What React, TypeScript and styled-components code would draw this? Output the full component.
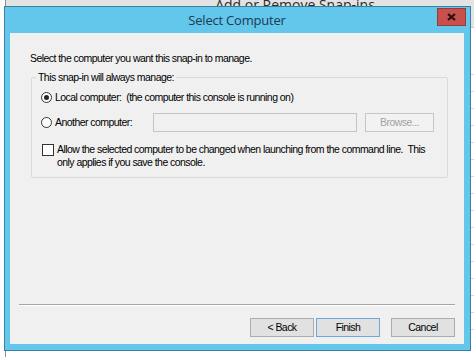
import styled, { createGlobalStyle } from 'styled-components';

const GlobalStyle = createGlobalStyle`
  html, body {
    margin: 0;
    padding: 0;
  }
  body {
    background: #ffffff;
    overflow: hidden;
  }
`;

const Screen = styled.div`
  position: relative;
  width: 474px;
  height: 357px;
  overflow: hidden;
  background: #ffffff;
`;

// the window behind the dialog
const ParentWindow = styled.div`
  margin-left: 5px;
  height: 100%;
  border-left: 1px solid #8e8e8e;
  display: flex;
  flex-direction: column;
`;

const ParentTitle = styled.div`
  height: 30px;
  background: #e3e3e3;
  border-bottom: 1px solid #c9c9c9;
  font-family: 'Open Sans', sans-serif;
  font-size: 14px;
  line-height: 16px;
  color: #2b2b2b;
  text-align: center;
  padding-left: 110px;
  margin-top: -3px;
`;

const ParentList = styled.div`
  display: flex;
  flex-direction: column;
  padding-top: 30px;
`;

const ParentRow = styled.div`
  height: 16px;
  border-bottom: 1px solid #d6d6d6;
`;

const Dialog = styled.div`
  position: absolute;
  left: 4px;
  top: 6px;
  width: 467px;
  height: 345px;
  box-sizing: border-box;
  border: 1px solid #3b7fa3;
  background: #62c7ea;
  padding: 0 6px 6px 5px;
  display: flex;
  flex-direction: column;
`;

const TitleBar = styled.div`
  height: 26px;
  display: grid;
  grid-template-columns: 1fr auto 1fr;
  align-items: start;
`;

const Title = styled.div`
  grid-column: 2;
  font-family: 'Open Sans', sans-serif;
  font-size: 13px;
  letter-spacing: -0.2px;
  line-height: 26px;
  color: #1b3a55;
`;

const CloseButton = styled.div`
  grid-column: 3;
  justify-self: end;
  margin-top: 1px;
  margin-right: -2px;
  width: 29px;
  height: 18px;
  box-sizing: border-box;
  background: #c7504c;
  border: 1px solid #9a3a37;
  display: flex;
  align-items: center;
  justify-content: center;
`;

const Client = styled.div`
  flex: 1;
  background: #f0f0f0;
  display: flex;
  flex-direction: column;
  padding: 19px 9px 7px 9px;
  font-family: 'Liberation Sans', Arial, sans-serif;
  font-size: 10.5px;
  letter-spacing: -0.55px;
  line-height: 13px;
  color: #000000;
  white-space: nowrap;
`;

const Intro = styled.div`
  padding-left: 11px;
`;

const Group = styled.fieldset`
  margin: 6px 7px 0 12px;
  padding: 0 9px 8px 9px;
  border: 1px solid #d9d9d9;
  border-radius: 2px;
  min-width: 0;
`;

const Legend = styled.legend`
  margin-left: -5px;
  padding: 0 2px;
  line-height: 13px;
`;

const OptionRow = styled.div<{ $height: number; $top: number }>`
  display: flex;
  align-items: center;
  height: ${(p) => p.$height}px;
  margin-top: ${(p) => p.$top}px;
`;

const RadioLabel = styled.label<{ $width?: number }>`
  display: flex;
  align-items: center;
  gap: 3px;
  width: ${(p) => (p.$width ? `${p.$width}px` : 'auto')};
`;

const Radio = styled.span<{ $checked?: boolean }>`
  width: 11px;
  height: 11px;
  box-sizing: border-box;
  border-radius: 50%;
  border: 1px solid #333333;
  background: #ffffff;
  display: flex;
  align-items: center;
  justify-content: center;
  &::after {
    content: '';
    width: 5px;
    height: 5px;
    border-radius: 50%;
    background: ${(p) => (p.$checked ? '#262626' : 'transparent')};
  }
`;

const TextBox = styled.div`
  width: 204px;
  height: 19px;
  box-sizing: border-box;
  border: 1px solid #c4c4c4;
  background: #f0f0f0;
`;

const DisabledButton = styled.div`
  margin-left: 8px;
  width: 69px;
  height: 19px;
  box-sizing: border-box;
  border: 1px solid #c6c6c6;
  background: #f2f2f2;
  color: #a2a2a2;
  display: flex;
  align-items: center;
  justify-content: center;
`;

const CheckRow = styled.div`
  display: flex;
  align-items: flex-start;
  gap: 3px;
  margin-top: 11px;
  padding-left: 1px;
`;

const CheckBox = styled.span`
  flex: none;
  width: 12px;
  height: 12px;
  margin-top: 1px;
  box-sizing: border-box;
  border: 1px solid #333333;
  background: #ffffff;
`;

const Separator = styled.div`
  margin-top: auto;
  height: 0;
  border-top: 1px solid #a5a5a5;
  border-bottom: 1px solid #ffffff;
`;

const ButtonRow = styled.div`
  display: flex;
  justify-content: flex-end;
  margin-top: 12px;
`;

const Button = styled.div<{ $default?: boolean; $gap?: number }>`
  width: 64px;
  height: 19px;
  box-sizing: border-box;
  margin-left: ${(p) => p.$gap ?? 0}px;
  border: 1px solid ${(p) => (p.$default ? '#6fa6dc' : '#adadad')};
  background: #e1e1e1;
  display: flex;
  align-items: center;
  justify-content: center;
`;

const App = () => {
  return (
    <Screen>
      <GlobalStyle />
      <ParentWindow>
        <ParentTitle>Add or Remove Snap-ins</ParentTitle>
        <ParentList>
          {Array.from({ length: 16 }).map((_, i) => (
            <ParentRow key={i} />
          ))}
        </ParentList>
      </ParentWindow>

      <Dialog>
        <TitleBar>
          <Title>Select Computer</Title>
          <CloseButton>
            <svg width="9" height="8" viewBox="0 0 9 8">
              <path d="M1 1 L8 7 M8 1 L1 7" stroke="#2a0e0c" strokeWidth="2.2" />
            </svg>
          </CloseButton>
        </TitleBar>
        <Client>
          <Intro>Select the computer you want this snap-in to manage.</Intro>
          <Group>
            <Legend>This snap-in will always manage:</Legend>
            <OptionRow $height={18} $top={4}>
              <RadioLabel>
                <Radio $checked />
                Local computer:&nbsp; (the computer this console is running on)
              </RadioLabel>
            </OptionRow>
            <OptionRow $height={19} $top={7}>
              <RadioLabel $width={112}>
                <Radio />
                Another computer:
              </RadioLabel>
              <TextBox />
              <DisabledButton>Browse...</DisabledButton>
            </OptionRow>
            <CheckRow>
              <CheckBox />
              <span>
                Allow the selected computer to be changed when launching from the command line.&nbsp; This
                <br />
                only applies if you save the console.
              </span>
            </CheckRow>
          </Group>
          <Separator />
          <ButtonRow>
            <Button>&lt; Back</Button>
            <Button $default $gap={2}>
              Finish
            </Button>
            <Button $gap={11}>Cancel</Button>
          </ButtonRow>
        </Client>
      </Dialog>
    </Screen>
  );
};

export default App;
